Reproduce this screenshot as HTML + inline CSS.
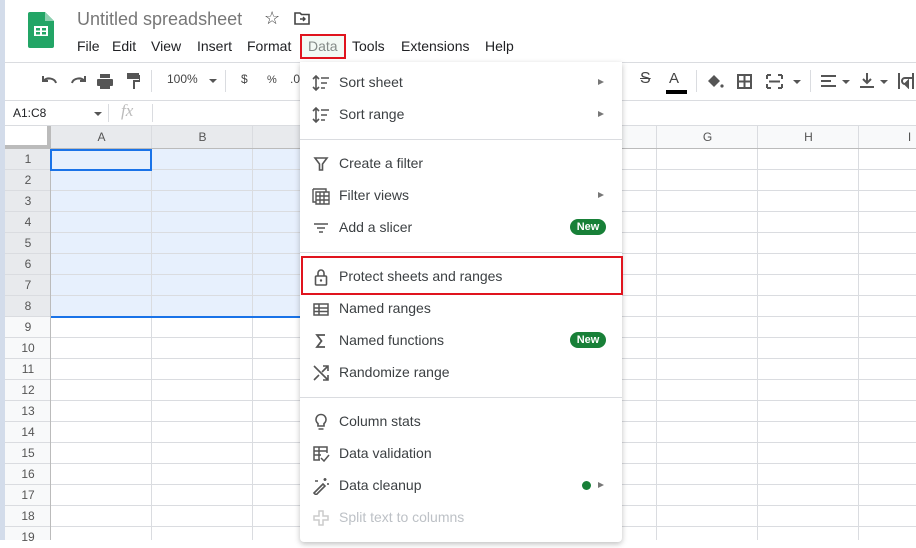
<!DOCTYPE html>
<html><head><style>
*{margin:0;padding:0;box-sizing:border-box}
body{width:916px;height:540px;overflow:hidden;background:#fff;font-family:"Liberation Sans",Arial,sans-serif;position:relative;color:#202124}
.a{position:absolute}
.rh{position:absolute;left:5px;width:46px;height:21px;font-size:12px;color:#555;text-align:center;line-height:21px}
.ch{position:absolute;top:126px;height:23px;font-size:12px;color:#555;text-align:center;line-height:23px;width:101px}
.mi{position:absolute;left:0;width:322px;height:32px;font-size:14px;color:#3c4043;line-height:32px}
.mi .t{position:absolute;left:39px}
.mi .ic{position:absolute;left:12px;top:8px;width:18px;height:18px}
.arr{position:absolute;left:298px;top:13px;width:0;height:0;border-left:6px solid #777;border-top:3.5px solid transparent;border-bottom:3.5px solid transparent}
.new{position:absolute;left:270px;top:8px;width:36px;height:16px;border-radius:8px;background:#188038;color:#fff;font-size:11px;font-weight:bold;line-height:16px;text-align:center}
.tb{position:absolute;top:72px;font-size:12px;color:#444}
</style></head><body>
<div class="a" style="left:0;top:0;width:5px;height:540px;background:#d3dcea"></div>
<svg class="a" style="left:28px;top:12px" width="26" height="36" viewBox="0 0 26 36"><path d="M2 0h15l9 9v25a2 2 0 0 1-2 2H2a2 2 0 0 1-2-2V2a2 2 0 0 1 2-2z" fill="#23a566"/><path d="M17 0v9h9z" fill="#8ed1b1"/><rect x="6" y="14" width="14" height="10" fill="#fff"/><rect x="8" y="16" width="4" height="2.5" fill="#23a566"/><rect x="14" y="16" width="4" height="2.5" fill="#23a566"/><rect x="8" y="20" width="4" height="2.5" fill="#23a566"/><rect x="14" y="20" width="4" height="2.5" fill="#23a566"/></svg>
<div class="a" style="left:77px;top:9px;font-size:18px;color:#777">Untitled spreadsheet</div>
<div class="a" style="left:264px;top:8px;font-size:18px;color:#444">☆</div>
<svg class="a" style="left:294px;top:12px" width="16" height="13" viewBox="0 0 16 13"><path d="M1 1h5l1.5 1.5H15v9.5H1z" fill="none" stroke="#444" stroke-width="1.6"/><path d="M6 7h5M9 5l2 2-2 2" stroke="#444" stroke-width="1.4" fill="none"/></svg>
<div class="a" style="left:77px;top:38px;font-size:14px;color:#202124">
<span class="a" style="left:0">File</span><span class="a" style="left:35px">Edit</span><span class="a" style="left:74px">View</span><span class="a" style="left:120px">Insert</span><span class="a" style="left:170px">Format</span><span class="a" style="left:231px">Data</span><span class="a" style="left:275px">Tools</span><span class="a" style="left:324px;white-space:nowrap">Extensions</span><span class="a" style="left:408px">Help</span></div>
<div class="a" style="left:300px;top:34px;width:46px;height:25px;border:2px solid #e0141e;background:rgba(230,244,234,.5)"></div>
<div class="a" style="left:5px;top:62px;width:911px;height:1px;background:#dadce0"></div>
<svg class="a" style="left:40px;top:74px" width="48" height="14" viewBox="0 0 48 14"><path d="M3 2v5h5M3.5 7A7 6 0 0 1 16 9" stroke="#555" stroke-width="2" fill="none"/><path d="M45 2v5h-5M44.5 7A7 6 0 0 0 32 9" stroke="#555" stroke-width="2" fill="none"/></svg>
<svg class="a" style="left:97px;top:74px" width="16" height="15"><rect x="3" y="0" width="10" height="4" fill="#555"/><rect x="0" y="5" width="16" height="7" rx="1" fill="#555"/><rect x="3" y="9" width="10" height="6" fill="#555"/></svg>
<svg class="a" style="left:127px;top:73px" width="13" height="17"><rect x="0" y="0" width="12" height="6" fill="#555"/><path d="M12 3h1v5H7v8" stroke="#555" stroke-width="2" fill="none"/></svg>
<div class="a" style="left:151px;top:70px;width:1px;height:22px;background:#dadce0"></div>
<div class="tb" style="left:167px">100%</div>
<div class="a" style="left:209px;top:79px;border-top:4px solid #555;border-left:4px solid transparent;border-right:4px solid transparent"></div>
<div class="a" style="left:225px;top:70px;width:1px;height:22px;background:#dadce0"></div>
<div class="tb" style="left:241px">$</div><div class="tb" style="left:267px;font-size:11px;top:74px">%</div><div class="tb" style="left:290px">.0</div>
<div class="tb" style="left:640px;font-size:16px;top:70px;text-decoration:line-through;color:#444">S</div>
<div class="tb" style="left:669px;font-size:15px;top:70px;color:#444">A</div>
<div class="a" style="left:666px;top:90px;width:21px;height:4px;background:#000"></div>
<div class="a" style="left:696px;top:70px;width:1px;height:22px;background:#dadce0"></div>
<svg class="a" style="left:706px;top:73px" width="18" height="16"><path d="M2 8l6-6 6 6-6 6z" fill="#555"/><circle cx="16" cy="13" r="1.6" fill="#555"/></svg>
<svg class="a" style="left:737px;top:74px" width="15" height="15"><rect x="1" y="1" width="13" height="13" fill="none" stroke="#555" stroke-width="2"/><path d="M7.5 1v13M1 7.5h13" stroke="#555" stroke-width="2"/></svg>
<svg class="a" style="left:766px;top:74px" width="17" height="15"><path d="M1 1v4M1 10v4M16 1v4M16 10v4M1 1h4M12 1h4M1 14h4M12 14h4M3 7.5h11" stroke="#555" stroke-width="2" fill="none"/></svg>
<div class="a" style="left:793px;top:80px;border-top:4px solid #555;border-left:4px solid transparent;border-right:4px solid transparent"></div>
<div class="a" style="left:810px;top:70px;width:1px;height:22px;background:#dadce0"></div>
<svg class="a" style="left:821px;top:75px" width="15" height="13"><path d="M0 1h15M0 6h10M0 11h15" stroke="#555" stroke-width="2"/></svg>
<div class="a" style="left:842px;top:80px;border-top:4px solid #555;border-left:4px solid transparent;border-right:4px solid transparent"></div>
<svg class="a" style="left:860px;top:73px" width="14" height="16"><path d="M7 0v10M3 6l4 4 4-4M0 14h14" stroke="#555" stroke-width="2" fill="none"/></svg>
<div class="a" style="left:880px;top:80px;border-top:4px solid #555;border-left:4px solid transparent;border-right:4px solid transparent"></div>
<svg class="a" style="left:898px;top:73px" width="18" height="16"><path d="M1 0v16M15 0v16M14 5H7a3 3 0 0 0 0 6h3M10 8v6l-3-3z" stroke="#555" stroke-width="2" fill="none"/></svg>
<div class="a" style="left:5px;top:100px;width:911px;height:1px;background:#dadce0"></div>
<div class="a" style="left:13px;top:106px;font-size:12px;color:#202124">A1:C8</div>
<div class="a" style="left:94px;top:112px;border-top:4px solid #555;border-left:4px solid transparent;border-right:4px solid transparent"></div>
<div class="a" style="left:108px;top:104px;width:1px;height:18px;background:#dadce0"></div>
<div class="a" style="left:121px;top:101px;font-size:17px;font-style:italic;color:#bbb;font-family:'Liberation Serif',serif">fx</div>
<div class="a" style="left:152px;top:104px;width:1px;height:18px;background:#dadce0"></div>
<div class="a" style="left:5px;top:125px;width:911px;height:1px;background:#dadce0"></div>
<div class="a" style="left:5px;top:126px;width:911px;height:23px;background:#f8f9fa"></div>
<div class="a" style="left:51px;top:126px;width:303px;height:23px;background:#e8eaed"></div>
<div class="a" style="left:5px;top:149px;width:46px;height:168px;background:#e8eaed"></div>
<div class="a" style="left:5px;top:317px;width:46px;height:223px;background:#f8f9fa"></div>
<div class="a" style="left:5px;top:126px;width:46px;height:23px;background:#fff;border-right:4px solid #bbb;border-bottom:4px solid #bbb"></div>
<div class="a" style="left:51px;top:149px;width:303px;height:168px;background:#e7f0fd"></div>
<div class="a" style="left:51px;top:126px;width:865px;height:414px;background-image:repeating-linear-gradient(90deg,transparent 0,transparent 100px,#dadce0 100px,#dadce0 101px)"></div>
<div class="a" style="left:5px;top:148px;width:911px;height:392px;background-image:repeating-linear-gradient(180deg,#dadce0 0,#dadce0 1px,transparent 1px,transparent 21px)"></div>
<div class="a" style="left:50px;top:126px;width:1px;height:414px;background:#bbb"></div>
<div class="a" style="left:5px;top:148px;width:911px;height:1px;background:#bbb"></div>
<div class="a" style="left:51px;top:316px;width:303px;height:2px;background:#1a73e8"></div>
<div class="a" style="left:50px;top:149px;width:102px;height:22px;border:2px solid #1a73e8"></div>
<div class="ch" style="left:51px">A</div><div class="ch" style="left:152px">B</div><div class="ch" style="left:657px">G</div><div class="ch" style="left:758px">H</div><div class="ch" style="left:859px">I</div>
<div class="rh" style="top:149px">1</div><div class="rh" style="top:170px">2</div><div class="rh" style="top:191px">3</div><div class="rh" style="top:212px">4</div><div class="rh" style="top:233px">5</div><div class="rh" style="top:254px">6</div><div class="rh" style="top:275px">7</div><div class="rh" style="top:296px">8</div><div class="rh" style="top:317px">9</div><div class="rh" style="top:338px">10</div><div class="rh" style="top:359px">11</div><div class="rh" style="top:380px">12</div><div class="rh" style="top:401px">13</div><div class="rh" style="top:422px">14</div><div class="rh" style="top:443px">15</div><div class="rh" style="top:464px">16</div><div class="rh" style="top:485px">17</div><div class="rh" style="top:506px">18</div><div class="rh" style="top:527px">19</div>
<div class="a" style="left:300px;top:62px;width:322px;height:480px;background:#fff;box-shadow:0 2px 6px rgba(0,0,0,.25);border-radius:0 0 4px 4px">
<div class="mi" style="top:4px"><svg class="ic" viewBox="0 0 18 18"><path d="M4 2v14M1 5l3-3 3 3M1 13l3 3 3-3M9 4h8M9 9h6M9 14h4" stroke="#555" stroke-width="1.6" fill="none"/></svg><span class="t">Sort sheet</span><i class="arr"></i></div>
<div class="mi" style="top:36px"><svg class="ic" viewBox="0 0 18 18"><path d="M4 2v14M1 5l3-3 3 3M1 13l3 3 3-3M9 4h8M9 9h6M9 14h4" stroke="#555" stroke-width="1.6" fill="none"/></svg><span class="t">Sort range</span><i class="arr"></i></div>
<div class="a" style="left:0;top:77px;width:322px;height:1px;background:#dadce0"></div>
<div class="mi" style="top:85px"><svg class="ic" viewBox="0 0 18 18"><path d="M3 3h12l-4.5 6v6h-3V9z" stroke="#555" stroke-width="1.6" fill="none"/></svg><span class="t">Create a filter</span></div>
<div class="mi" style="top:117px"><svg class="ic" viewBox="0 0 18 18"><path d="M1 2h13v3M1 2v13h3M4 5h13v12H4z M4 9h13M4 13h13M8 5v12M12 5v12" stroke="#555" stroke-width="1.4" fill="none"/></svg><span class="t">Filter views</span><i class="arr"></i></div>
<div class="mi" style="top:149px"><svg class="ic" viewBox="0 0 18 18"><path d="M2 5h14M5 9h8M7 13h4" stroke="#555" stroke-width="1.6"/></svg><span class="t">Add a slicer</span><span class="new">New</span></div>
<div class="a" style="left:0;top:190px;width:322px;height:1px;background:#dadce0"></div>
<div class="mi" style="top:198px"><svg class="ic" viewBox="0 0 18 18"><rect x="3.5" y="8" width="11" height="9" rx="1" stroke="#555" stroke-width="1.6" fill="none"/><path d="M6 8V5a3 3 0 0 1 6 0v3" stroke="#555" stroke-width="1.6" fill="none"/><circle cx="9" cy="12.5" r="1.2" fill="#555"/></svg><span class="t">Protect sheets and ranges</span></div>
<div class="mi" style="top:230px"><svg class="ic" viewBox="0 0 18 18"><path d="M2 4h14v11H2zM2 8h14M2 11.5h14M7 4v11" stroke="#555" stroke-width="1.5" fill="none"/></svg><span class="t">Named ranges</span></div>
<div class="mi" style="top:262px"><svg class="ic" viewBox="0 0 18 18"><path d="M13 3H5l4.5 6L5 15h8" stroke="#555" stroke-width="1.8" fill="none"/></svg><span class="t">Named functions</span><span class="new">New</span></div>
<div class="mi" style="top:294px"><svg class="ic" viewBox="0 0 18 18"><path d="M2 2l14 14M11 16h5v-5M11 2h5v5M16 2L10 8M2 16l5-5" stroke="#555" stroke-width="1.6" fill="none"/></svg><span class="t">Randomize range</span></div>
<div class="a" style="left:0;top:335px;width:322px;height:1px;background:#dadce0"></div>
<div class="mi" style="top:343px"><svg class="ic" viewBox="0 0 18 18"><path d="M9 1.5a5 5 0 0 0-3 9v2.5h6v-2.5a5 5 0 0 0-3-9zM6.5 16h5" stroke="#555" stroke-width="1.6" fill="none"/></svg><span class="t">Column stats</span></div>
<div class="mi" style="top:375px"><svg class="ic" viewBox="0 0 18 18"><path d="M8 15H2V2h13v6M2 6h13M2 10h7M7 2v13M9 13l3 3 5-6" stroke="#555" stroke-width="1.5" fill="none"/></svg><span class="t">Data validation</span></div>
<div class="mi" style="top:407px"><svg class="ic" viewBox="0 0 18 18"><path d="M2 16L11 7l2 2-9 9zM13 1v3M11.5 2.5h3M16 6v2M3 4h3" stroke="#555" stroke-width="1.6" fill="none"/></svg><span class="t">Data cleanup</span><span class="a" style="left:282px;top:12px;width:9px;height:9px;border-radius:50%;background:#188038"></span><i class="arr"></i></div>
<div class="mi" style="top:439px;color:#bdc1c6"><svg class="ic" viewBox="0 0 18 18"><path d="M7 2h4v5h5v4h-5v5H7v-5H2V7h5z" stroke="#ccc" stroke-width="1.5" fill="none"/></svg><span class="t">Split text to columns</span></div>
<div class="a" style="left:1px;top:194px;width:322px;height:39px;border:2px solid #e0141e"></div>
</div>
</body></html>
